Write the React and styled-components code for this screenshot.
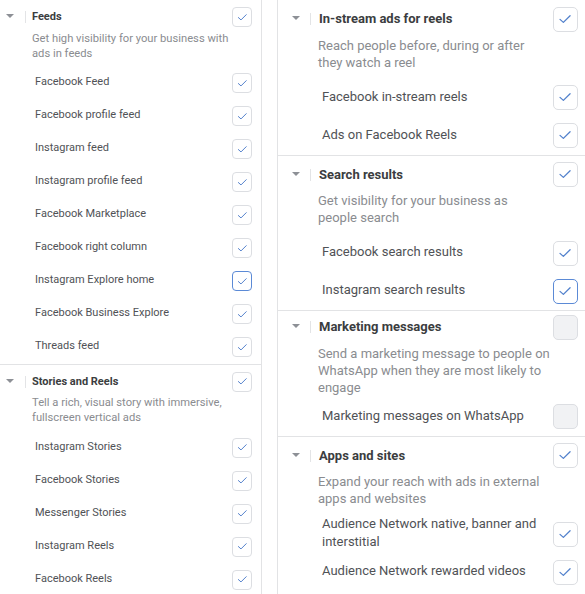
import React from "react";
import styled, { createGlobalStyle, css } from "styled-components";

const Global = createGlobalStyle`
  html, body { margin: 0; padding: 0; background: #fff; overflow: hidden; }
  body { font-family: Roboto, "Liberation Sans", Arial, sans-serif; -webkit-font-smoothing: antialiased; }
  * { box-sizing: border-box; }
`;

const SIZES = {
  sm: {
    padL: 6, padR: 9, caretGap: 11, titleGap: 6, descIndent: 32, itemIndent: 35,
    headerH: 20, box: 20, radius: 4, titleSize: 11, descSize: 11.2, descLH: 15,
    itemSize: 11, itemH: 33, descTop: 3.5, itemsTop: 6, padTop: 7,
  },
  lg: {
    padL: 14, padR: 7, caretGap: 10, titleGap: 8, descIndent: 40, itemIndent: 44,
    headerH: 24, box: 25, radius: 5, titleSize: 13, descSize: 13, descLH: 17,
    itemSize: 13, itemH: 38, descTop: 5.5, itemsTop: 8, padTop: 7,
  },
};

const Page = styled.div`
  display: flex;
  width: 585px;
  height: 594px;
  overflow: hidden;
`;

const Column = styled.div`
  display: flex;
  flex-direction: column;
  ${(p) =>
    p.$size === "sm"
      ? css`
          width: 262px;
          border-right: 1px solid #e2e3e5;
        `
      : css`
          flex: 1;
          margin-left: 15px;
          border-left: 1px solid #e2e3e5;
        `}
`;

const Section = styled.section`
  display: flex;
  flex-direction: column;
  padding: ${(p) => (p.$tight ? 4 : SIZES[p.$size].padTop)}px ${(p) => SIZES[p.$size].padR}px 0
    ${(p) => SIZES[p.$size].padL}px;
  border-bottom: 1px solid #e2e3e5;
  &:last-child { border-bottom: none; }
`;

const Header = styled.div`
  display: flex;
  align-items: center;
  height: ${(p) => SIZES[p.$size].headerH}px;
`;

const Caret = styled.span`
  width: 0;
  height: 0;
  border-left: 4px solid transparent;
  border-right: 4px solid transparent;
  border-top: 4px solid #8d9096;
  margin-right: ${(p) => SIZES[p.$size].caretGap}px;
  margin-top: -2px;
`;

const Sep = styled.span`
  width: 1px;
  height: 12px;
  background: #e3e4e6;
  margin-right: ${(p) => SIZES[p.$size].titleGap}px;
`;

const Title = styled.span`
  flex: 1;
  font-weight: 700;
  font-size: ${(p) => SIZES[p.$size].titleSize}px;
  color: #3b3d40;
  margin-top: -1px;
`;

const Desc = styled.p`
  margin: ${(p) => SIZES[p.$size].descTop}px 0 0 ${(p) => SIZES[p.$size].descIndent - SIZES[p.$size].padL}px;
  font-size: ${(p) => SIZES[p.$size].descSize}px;
  line-height: ${(p) => SIZES[p.$size].descLH}px;
  color: #8a8c90;
  white-space: nowrap;
`;

const Items = styled.div`
  display: flex;
  flex-direction: column;
  margin-top: ${(p) => (p.$tight ? 2 : SIZES[p.$size].itemsTop)}px;
`;

const Item = styled.div`
  display: flex;
  align-items: center;
  justify-content: space-between;
  min-height: ${(p) => SIZES[p.$size].itemH}px;
  padding: 2px 0 2px ${(p) => SIZES[p.$size].itemIndent - SIZES[p.$size].padL}px;
`;

const ItemLabel = styled.span`
  font-size: ${(p) => SIZES[p.$size].itemSize}px;
  line-height: ${(p) => SIZES[p.$size].descLH + 1}px;
  color: #505256;
  max-width: 224px;
  margin-top: -2px;
`;

const Box = styled.span`
  flex: none;
  display: flex;
  align-items: center;
  justify-content: center;
  width: ${(p) => SIZES[p.$size].box}px;
  height: ${(p) => SIZES[p.$size].box}px;
  border-radius: ${(p) => SIZES[p.$size].radius}px;
  background: ${(p) => (p.$checked ? "#fff" : "#f1f2f4")};
  border: ${(p) => (p.$focus ? "1.6px solid #5b8ad6" : "1px solid #dcdee2")};
`;

function Check({ size, checked = true, focus }) {
  return (
    <Box $size={size} $checked={checked} $focus={focus}>
      {checked && (
        <svg width="70%" height="70%" viewBox="0 0 24 24" fill="none">
          <polyline
            points="4.5,12.5 9.5,17 19.5,7"
            stroke="#5281cc"
            strokeWidth="1.9"
            strokeLinecap="round"
            strokeLinejoin="round"
          />
        </svg>
      )}
    </Box>
  );
}

const LEFT = [
  {
    title: "Feeds",
    desc: ["Get high visibility for your business with", "ads in feeds"],
    items: [
      ["Facebook Feed"],
      ["Facebook profile feed"],
      ["Instagram feed"],
      ["Instagram profile feed"],
      ["Facebook Marketplace"],
      ["Facebook right column"],
      ["Instagram Explore home", true, true],
      ["Facebook Business Explore"],
      ["Threads feed"],
    ],
  },
  {
    title: "Stories and Reels",
    desc: ["Tell a rich, visual story with immersive,", "fullscreen vertical ads"],
    items: [
      ["Instagram Stories"],
      ["Facebook Stories"],
      ["Messenger Stories"],
      ["Instagram Reels"],
      ["Facebook Reels"],
    ],
  },
];

const RIGHT = [
  {
    title: "In-stream ads for reels",
    desc: ["Reach people before, during or after", "they watch a reel"],
    items: [["Facebook in-stream reels"], ["Ads on Facebook Reels"]],
  },
  {
    title: "Search results",
    desc: ["Get visibility for your business as", "people search"],
    items: [["Facebook search results"], ["Instagram search results", true, true]],
  },
  {
    title: "Marketing messages",
    checked: false,
    tight: true,
    desc: ["Send a marketing message to people on", "WhatsApp when they are most likely to", "engage"],
    items: [["Marketing messages on WhatsApp", false]],
  },
  {
    title: "Apps and sites",
    desc: ["Expand your reach with ads in external", "apps and websites"],
    items: [
      ["Audience Network native, banner and interstitial"],
      ["Audience Network rewarded videos"],
    ],
  },
];

function Group({ size, data }) {
  const checked = data.checked !== false;
  return (
    <Section $size={size} $tight={data.tight}>
      <Header $size={size}>
        <Caret $size={size} />
        <Sep $size={size} />
        <Title $size={size}>{data.title}</Title>
        <Check size={size} checked={checked} />
      </Header>
      <Desc $size={size}>
        {data.desc.map((line, i) => (
          <React.Fragment key={i}>
            {i > 0 && <br />}
            {line}
          </React.Fragment>
        ))}
      </Desc>
      <Items $size={size} $tight={data.tight}>
        {data.items.map(([label, c = true, focus = false]) => (
          <Item $size={size} key={label}>
            <ItemLabel $size={size}>{label}</ItemLabel>
            <Check size={size} checked={c} focus={focus} />
          </Item>
        ))}
      </Items>
    </Section>
  );
}

export default function App() {
  return (
    <>
      <Global />
      <Page>
        <Column $size="sm">
          {LEFT.map((g) => (
            <Group key={g.title} size="sm" data={g} />
          ))}
        </Column>
        <Column $size="lg">
          {RIGHT.map((g) => (
            <Group key={g.title} size="lg" data={g} />
          ))}
        </Column>
      </Page>
    </>
  );
}
